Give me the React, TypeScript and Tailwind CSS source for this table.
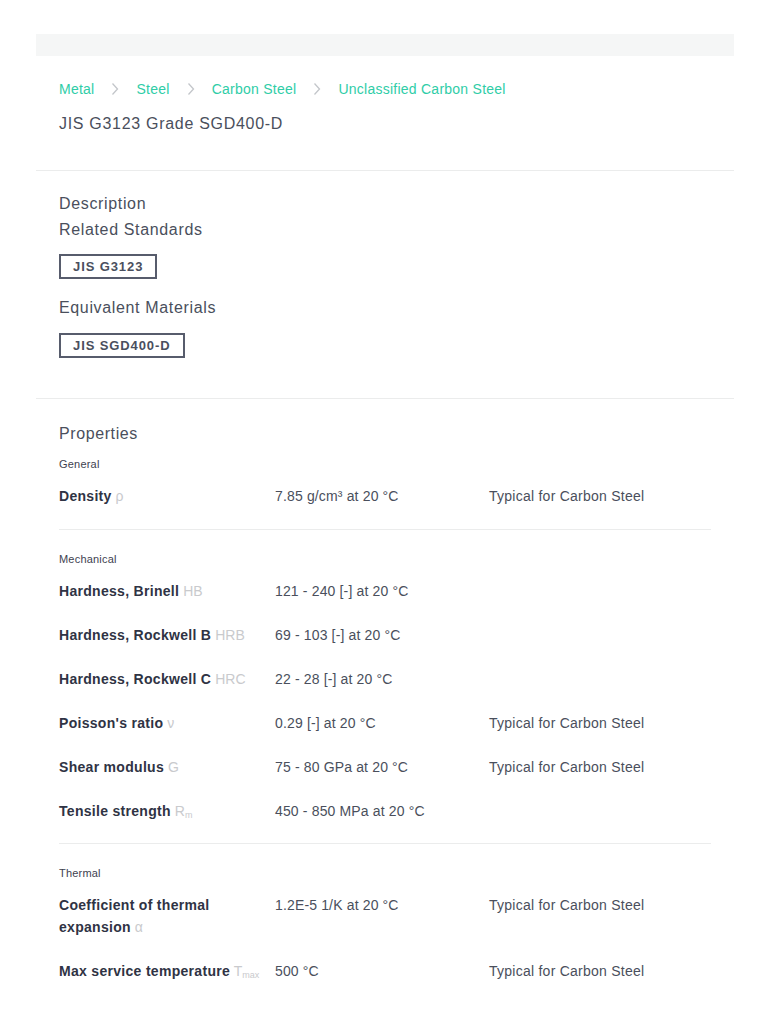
const crumbs = ["Metal", "Steel", "Carbon Steel", "Unclassified Carbon Steel"];

type Row = { label: string; sym: string; sub?: string; value: string; note?: string };
type Group = { name: string; rows: Row[] };

const groups: Group[] = [
  {
    name: "General",
    rows: [{ label: "Density", sym: "ρ", value: "7.85 g/cm³ at 20 °C", note: "Typical for Carbon Steel" }],
  },
  {
    name: "Mechanical",
    rows: [
      { label: "Hardness, Brinell", sym: "HB", value: "121 - 240 [-] at 20 °C" },
      { label: "Hardness, Rockwell B", sym: "HRB", value: "69 - 103 [-] at 20 °C" },
      { label: "Hardness, Rockwell C", sym: "HRC", value: "22 - 28 [-] at 20 °C" },
      { label: "Poisson's ratio", sym: "ν", value: "0.29 [-] at 20 °C", note: "Typical for Carbon Steel" },
      { label: "Shear modulus", sym: "G", value: "75 - 80 GPa at 20 °C", note: "Typical for Carbon Steel" },
      { label: "Tensile strength", sym: "R", sub: "m", value: "450 - 850 MPa at 20 °C" },
    ],
  },
  {
    name: "Thermal",
    rows: [
      { label: "Coefficient of thermal expansion", sym: "α", value: "1.2E-5 1/K at 20 °C", note: "Typical for Carbon Steel" },
      { label: "Max service temperature", sym: "T", sub: "max", value: "500 °C", note: "Typical for Carbon Steel" },
    ],
  },
];

function Chevron() {
  return (
    <svg width="10" height="14" viewBox="0 0 10 14" fill="none" className="mx-[16px]">
      <path d="M2.5 1.5 L7.5 7 L2.5 12.5" stroke="#c3c6ca" strokeWidth="1.3" />
    </svg>
  );
}

function Badge({ text }: { text: string }) {
  return (
    <div className="inline-block border-2 border-[#575c6c] px-[12px] h-[25px] leading-[21px] text-[13px] font-bold tracking-[0.9px] text-[#4a4f5e]">
      {text}
    </div>
  );
}

export default function App() {
  return (
    <div className="min-h-[1024px] bg-white pt-[34px] font-['Liberation_Sans',Arial,sans-serif] text-[#4a4f5c]">
      <div className="mx-[36px] w-[698px]">
        <div className="h-[22px] bg-[#f5f6f6]" />

        <div className="px-[23px] pt-[23px] pb-[34px] border-b border-[#ebecec]">
          <div className="flex items-center h-[20px] text-[14px] tracking-[0.25px] text-[#2fcda7]">
            {crumbs.map((c, i) => (
              <div key={c} className="flex items-center">
                {i > 0 && <Chevron />}
                <span>{c}</span>
              </div>
            ))}
          </div>
          <h1 className="mt-[13px] text-[16px] leading-[24px] tracking-[0.7px]">JIS G3123 Grade SGD400-D</h1>
        </div>

        <div className="px-[23px] pt-[20px] pb-[40px] border-b border-[#ebecec]">
          <div className="text-[16px] leading-[26px] tracking-[0.65px]">Description</div>
          <div className="text-[16px] leading-[26px] tracking-[0.65px]">Related Standards</div>
          <div className="mt-[11px]">
            <Badge text="JIS G3123" />
          </div>
          <div className="mt-[16px] text-[16px] leading-[26px] tracking-[0.65px]">Equivalent Materials</div>
          <div className="mt-[12px]">
            <Badge text="JIS SGD400-D" />
          </div>
        </div>

        <div className="px-[23px] pt-[22px] pb-[20px]">
          <div className="text-[16px] leading-[26px] tracking-[0.6px]">Properties</div>
          {groups.map((g, gi) => (
            <div
              key={g.name}
              className={gi === 0 ? "mt-[9px]" : gi === 1 ? "mt-[11px] border-t border-[#ebecec] pt-[21px]" : "mt-[10px] border-t border-[#ebecec] pt-[21px]"}
            >
              <div className="text-[11px] leading-[16px] tracking-[0.2px] text-[#3e4250]">{g.name}</div>
              <div className="mt-[2px]">
                {g.rows.map((r) => (
                  <div key={r.label} className="grid grid-cols-[216px_214px_1fr] py-[11px] text-[14px] leading-[22px]">
                    <div className="pr-[6px]">
                      <span className="font-bold tracking-[0.3px] text-[#2f3344]">{r.label}</span>{" "}
                      <span className="whitespace-nowrap text-[#c9cacd]">
                        {r.sym}
                        {r.sub && <sub className="text-[9px] leading-none">{r.sub}</sub>}
                      </span>
                    </div>
                    <div className="tracking-[0.15px]">{r.value}</div>
                    <div className="tracking-[0.25px]">{r.note ?? ""}</div>
                  </div>
                ))}
              </div>
            </div>
          ))}
        </div>
      </div>
    </div>
  );
}
